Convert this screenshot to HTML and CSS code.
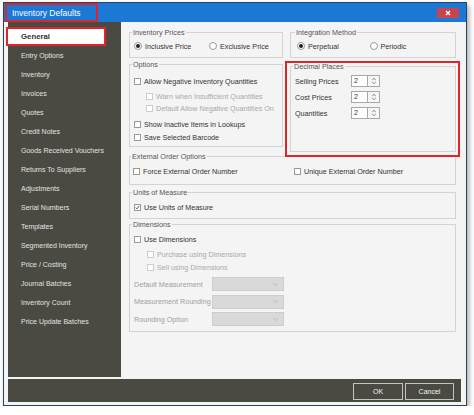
FILE: index.html
```html
<!DOCTYPE html>
<html>
<head>
<meta charset="utf-8">
<link rel="stylesheet" href="styles.css">
</head>
<body>
<div class="window">
  <div class="titlebar">
    <span class="title">Inventory Defaults</span>
    <span class="close"><svg width="6" height="6" viewBox="0 0 6 6"><path d="M1 1L5 5M5 1L1 5" stroke="#fff" stroke-width="1.2"/></svg></span>
  </div>
  <div class="body">
    <nav class="sidebar">
      <div class="nav-item active">General</div>
      <div class="nav-item">Entry Options</div>
      <div class="nav-item">Inventory</div>
      <div class="nav-item">Invoices</div>
      <div class="nav-item">Quotes</div>
      <div class="nav-item">Credit Notes</div>
      <div class="nav-item">Goods Received Vouchers</div>
      <div class="nav-item">Returns To Suppliers</div>
      <div class="nav-item">Adjustments</div>
      <div class="nav-item">Serial Numbers</div>
      <div class="nav-item">Templates</div>
      <div class="nav-item">Segmented Inventory</div>
      <div class="nav-item">Price / Costing</div>
      <div class="nav-item">Journal Batches</div>
      <div class="nav-item">Inventory Count</div>
      <div class="nav-item">Price Update Batches</div>
    </nav>
    <main class="main">
      <div class="row two-col">
        <fieldset class="group g-prices">
          <legend>Inventory Prices</legend>
          <div class="radio-row">
            <label class="radio-opt"><span class="radio on"></span>Inclusive Price</label>
            <label class="radio-opt"><span class="radio"></span>Exclusive Price</label>
          </div>
        </fieldset>
        <fieldset class="group g-integration">
          <legend>Integration Method</legend>
          <div class="radio-row">
            <label class="radio-opt narrow"><span class="radio on"></span>Perpetual</label>
            <label class="radio-opt narrow"><span class="radio"></span>Periodic</label>
          </div>
        </fieldset>
      </div>

      <div class="row two-col row-options">
        <fieldset class="group g-options">
          <legend>Options</legend>
          <div class="check-row"><span class="check"></span>Allow Negative Inventory Quantities</div>
          <div class="sub">
            <div class="check-row sub-row disabled"><span class="check"></span>Warn when Insufficient Quantities</div>
            <div class="check-row sub-row disabled"><span class="check"></span>Default Allow Negative Quantities On</div>
          </div>
          <div class="check-row"><span class="check"></span>Show Inactive Items in Lookups</div>
          <div class="check-row"><span class="check"></span>Save Selected Barcode</div>
        </fieldset>
        <div class="highlight-wrap">
          <fieldset class="group g-decimal">
            <legend>Decimal Places</legend>
            <div class="spin-row">
              <span class="spin-label">Selling Prices</span>
              <span class="spin"><span class="spin-input">2</span><span class="spin-btn"><svg width="10" height="10" viewBox="0 0 10 10"><path d="M3.2 4L5 2.3L6.8 4M3.2 6L5 7.7L6.8 6" fill="none" stroke="#777" stroke-width="0.9"/></svg></span></span>
            </div>
            <div class="spin-row">
              <span class="spin-label">Cost Prices</span>
              <span class="spin"><span class="spin-input">2</span><span class="spin-btn"><svg width="10" height="10" viewBox="0 0 10 10"><path d="M3.2 4L5 2.3L6.8 4M3.2 6L5 7.7L6.8 6" fill="none" stroke="#777" stroke-width="0.9"/></svg></span></span>
            </div>
            <div class="spin-row">
              <span class="spin-label">Quantities</span>
              <span class="spin"><span class="spin-input">2</span><span class="spin-btn"><svg width="10" height="10" viewBox="0 0 10 10"><path d="M3.2 4L5 2.3L6.8 4M3.2 6L5 7.7L6.8 6" fill="none" stroke="#777" stroke-width="0.9"/></svg></span></span>
            </div>
          </fieldset>
          <div class="red-mark"></div>
        </div>
      </div>

      <fieldset class="group g-external">
        <legend>External Order Options</legend>
        <div class="ext-row">
          <div class="check-row"><span class="check"></span>Force External Order Number</div>
          <div class="check-row"><span class="check"></span>Unique External Order Number</div>
        </div>
      </fieldset>

      <fieldset class="group g-units">
        <legend>Units of Measure</legend>
        <div class="check-row"><span class="check checked"><svg width="7" height="7" viewBox="0 0 7 7"><path d="M1.2 3.6L2.8 5.3L5.9 1.4" fill="none" stroke="#222" stroke-width="1.1"/></svg></span>Use Units of Measure</div>
      </fieldset>

      <fieldset class="group g-dims">
        <legend>Dimensions</legend>
        <div class="check-row"><span class="check"></span>Use Dimensions</div>
        <div class="sub dims-sub">
          <div class="check-row dim-sub-row disabled"><span class="check"></span>Purchase using Dimensions</div>
          <div class="check-row dim-sub-row disabled"><span class="check"></span>Sell using Dimensions</div>
        </div>
        <div class="form-rows">
          <div class="form-row"><span class="form-label">Default Measurement</span><span class="select"><svg width="7" height="5" viewBox="0 0 7 5"><path d="M1 1.2L3.5 3.6L6 1.2" fill="none" stroke="#b8b8b8" stroke-width="0.9"/></svg></span></div>
          <div class="form-row"><span class="form-label">Measurement Rounding</span><span class="select"><svg width="7" height="5" viewBox="0 0 7 5"><path d="M1 1.2L3.5 3.6L6 1.2" fill="none" stroke="#b8b8b8" stroke-width="0.9"/></svg></span></div>
          <div class="form-row"><span class="form-label">Rounding Option</span><span class="select"><svg width="7" height="5" viewBox="0 0 7 5"><path d="M1 1.2L3.5 3.6L6 1.2" fill="none" stroke="#b8b8b8" stroke-width="0.9"/></svg></span></div>
        </div>
      </fieldset>
    </main>
  </div>
  <div class="footer">
    <button class="btn btn-ok">OK</button>
    <button class="btn btn-cancel">Cancel</button>
  </div>
</div>
</body>
</html>
```

FILE: styles.css
```css
* { box-sizing: border-box; }
html, body { margin: 0; padding: 0; background: #fff; }
body {
  font-family: "Liberation Sans", Arial, sans-serif;
  font-size: 7.2px;
  color: #333;
}

.window {
  margin: 2px 0 0 3px;
  width: 464px;
  height: 404px;
  border: 1px solid #25465f;
  background: #f4f4f4;
  box-shadow: 2px 3px 5px rgba(0, 0, 0, 0.35);
  display: flex;
  flex-direction: column;
}

.titlebar {
  height: 19px;
  flex: none;
  background: #1b78d4;
  display: flex;
  align-items: center;
  justify-content: space-between;
  padding: 0 7px 0 3px;
}
.title {
  display: flex;
  align-items: center;
  width: 89px;
  height: 15px;
  padding-left: 5px;
  color: #fff;
  font-size: 8.5px;
  outline: 2px solid #e0242c;
}
.close {
  width: 22px;
  height: 10px;
  background: #c8454c;
  display: flex;
  align-items: center;
  justify-content: center;
}
.close svg { display: block; }

.body {
  display: flex;
  height: 355px;
  flex: none;
  padding: 0 5px 0 4px;
}

.sidebar {
  width: 113px;
  flex: none;
  background: #4a4a43;
  padding-top: 4.5px;
}
.nav-item {
  height: 19px;
  line-height: 19px;
  padding-left: 13px;
  color: #e2e2e2;
  font-size: 7px;
  white-space: nowrap;
}
.nav-item.active {
  width: 96px;
  height: 15px;
  line-height: 15px;
  margin: 2px 0;
  background: #fff;
  color: #333;
  font-weight: bold;
  font-size: 7.8px;
  outline: 2px solid #e0242c;
}

.main {
  width: 340px;
  flex: none;
  padding: 6px 5px 0 8px;
  display: flex;
  flex-direction: column;
  background: #f4f4f4;
}

.two-col {
  display: grid;
  grid-template-columns: 154px 166px;
  column-gap: 7px;
  align-items: start;
}

.group {
  margin: 0;
  min-width: 0;
  border: 1px solid #d3d3d3;
  padding: 0 4px;
}
.group legend {
  padding: 0 1px;
  margin-left: -2px;
  line-height: 9px;
  color: #555;
  font-size: 7.2px;
}

.g-prices, .g-integration { height: 30px; }
.g-integration { padding-left: 6px; }

.radio-row {
  display: flex;
  align-items: center;
  height: 10px;
  margin-top: 4px;
}
.radio-opt {
  display: flex;
  align-items: center;
  gap: 3px;
  width: 75px;
  flex: none;
}
.radio-opt.narrow { width: 72.5px; }
.radio {
  width: 8px;
  height: 8px;
  border-radius: 50%;
  border: 1px solid #9a9a9a;
  background: #fff;
  flex: none;
}
.radio.on::after {
  content: "";
  display: block;
  width: 4px;
  height: 4px;
  margin: 1px;
  border-radius: 50%;
  background: #222;
}

.row-options { margin-top: 2px; }
.g-options { height: 87px; padding-top: 5.5px; }

.check-row {
  display: flex;
  align-items: center;
  gap: 3px;
  height: 13px;
  white-space: nowrap;
}
.check {
  width: 7px;
  height: 7px;
  border: 1px solid #9a9a9a;
  background: #fff;
  flex: none;
  display: flex;
  align-items: center;
  justify-content: center;
}
.check svg { display: block; }
.disabled { color: #a9a9a9; }
.disabled .check { border-color: #cdcdcd; }

.sub { padding: 2.5px 0 3.5px 12px; }
.sub-row { height: 12px; }

.highlight-wrap { position: relative; }
.g-decimal { height: 90.5px; margin-top: 1.5px; }
.red-mark {
  position: absolute;
  left: -5px;
  right: -4px;
  top: 1px;
  bottom: -5px;
  border: 2px solid #e0242c;
  pointer-events: none;
}
.spin-row {
  display: flex;
  align-items: center;
  height: 12px;
  margin-top: 4px;
}
.spin-row:first-of-type { margin-top: 4.5px; }
.spin-label { width: 56px; flex: none; }
.spin { display: flex; height: 12px; }
.spin-input {
  width: 17px;
  border: 1px solid #a9a9a9;
  background: #fff;
  padding-left: 2px;
  line-height: 10px;
}
.spin-btn {
  width: 12px;
  border: 1px solid #a9a9a9;
  border-left: none;
  background: #f7f7f7;
  display: flex;
  align-items: center;
  justify-content: center;
}
.spin-btn svg { display: block; }

.g-external { height: 33px; padding: 0 3px; }
.ext-row {
  display: grid;
  grid-template-columns: 161px 1fr;
  margin-top: 3.5px;
}

.g-units { height: 31px; margin-top: 2.5px; }
.g-units .check-row { margin-top: 4px; }

.g-dims { height: 112.5px; margin-top: 1px; }
.g-dims > .check-row:first-of-type { margin-top: 4px; }
.dims-sub { padding: 2px 0 0 13px; }
.dim-sub-row { height: 13px; }
.form-rows {
  display: flex;
  flex-direction: column;
  gap: 3.5px;
  margin-top: 3.5px;
}
.form-row {
  display: flex;
  align-items: center;
  height: 14px;
}
.form-label {
  width: 78px;
  flex: none;
  color: #a0a0a0;
  white-space: nowrap;
}
.select {
  width: 72px;
  height: 14px;
  background: #d9d9d9;
  border: 1px solid #cdcdcd;
  display: flex;
  align-items: center;
  justify-content: flex-end;
  padding-right: 4px;
}
.select svg { display: block; }

.footer {
  height: 23px;
  flex: none;
  margin: 2px 5px 0 4px;
  background: #4a4a43;
  display: flex;
  justify-content: flex-end;
  align-items: center;
  gap: 2px;
  padding: 1px 7px 0 0;
}
.btn {
  height: 17px;
  border: 1px solid #c4c4c4;
  background: #4a4a43;
  color: #f2f2f2;
  font-family: "Liberation Sans", Arial, sans-serif;
  font-size: 7px;
  padding: 0;
  display: flex;
  align-items: center;
  justify-content: center;
}
.btn-ok { width: 50px; }
.btn-cancel { width: 49px; }
```
